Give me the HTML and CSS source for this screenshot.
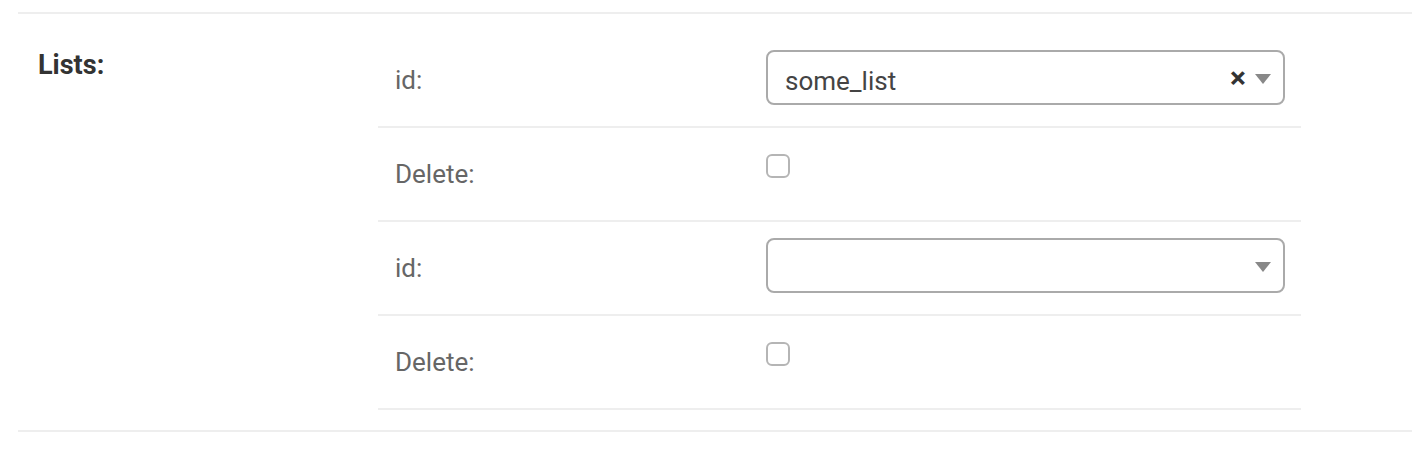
FILE: index.html
```html
<!DOCTYPE html>
<html>
<head>
<meta charset="utf-8">
<link rel="stylesheet" href="styles.css">
</head>
<body>
<div class="module">
  <div class="form-row">
    <div class="field-label">Lists:</div>
    <div class="inline-table">
      <div class="row">
        <div class="cell-label">id:</div>
        <div class="cell-field">
          <div class="select">
            <span class="select-text">some_list</span>
            <span class="select-clear">×</span>
            <span class="select-arrow"><b class="tri"></b></span>
          </div>
        </div>
      </div>
      <div class="row">
        <div class="cell-label">Delete:</div>
        <div class="cell-field"><input type="checkbox" class="cb"></div>
      </div>
      <div class="row">
        <div class="cell-label">id:</div>
        <div class="cell-field">
          <div class="select">
            <span class="select-text"></span>
            <span class="select-arrow"><b class="tri"></b></span>
          </div>
        </div>
      </div>
      <div class="row">
        <div class="cell-label">Delete:</div>
        <div class="cell-field"><input type="checkbox" class="cb"></div>
      </div>
    </div>
  </div>
</div>
</body>
</html>
```

FILE: styles.css
```css
html, body {
  margin: 0;
  padding: 0;
  background: #fff;
}
body {
  font-family: Roboto, "Liberation Sans", sans-serif;
  font-size: 26px;
  line-height: 30px;
  color: #333;
}
.module {
  margin: 12px 0 0 18px;
  border-top: 2px solid #eee;
  border-bottom: 2px solid #eee;
  padding-bottom: 20px;
}
.form-row {
  display: flex;
  align-items: flex-start;
}
.field-label {
  width: 340px;
  padding: 36px 0 0 20px;
  font-size: 27px;
  font-weight: bold;
  color: #333;
}
.inline-table {
  width: 923px;
  margin-top: 20px;
}
.row {
  display: flex;
  height: 92px;
  border-bottom: 2px solid #eee;
}
.cell-label {
  width: 371px;
  padding: 31px 0 0 17px;
  color: #666;
}
.cell-field {
  flex: 1;
  padding-top: 16px;
}
.select {
  width: 515px;
  height: 51px;
  border: 2px solid #aaa;
  border-radius: 8px;
  display: flex;
  align-items: flex-start;
}
.select-text {
  flex: 1;
  padding: 14px 0 0 17px;
  color: #444;
  line-height: 30px;
}
.select-clear {
  font-size: 30px;
  font-weight: bold;
  color: #333;
  padding-top: 11px;
  line-height: 30px;
  margin-right: -3px;
}
.select-arrow {
  width: 40px;
  height: 51px;
  display: flex;
  justify-content: center;
  align-items: center;
}
.tri {
  width: 0;
  height: 0;
  border-style: solid;
  border-width: 10px 8px 0 8px;
  border-color: #888 transparent transparent transparent;
  margin-top: 2px;
}
.cb {
  -webkit-appearance: none;
  appearance: none;
  display: block;
  width: 24px;
  height: 24px;
  margin: 10px 0 0 0;
  border: 2px solid #b5b5b5;
  border-radius: 6px;
  background: #fff;
  box-sizing: border-box;
}
```
